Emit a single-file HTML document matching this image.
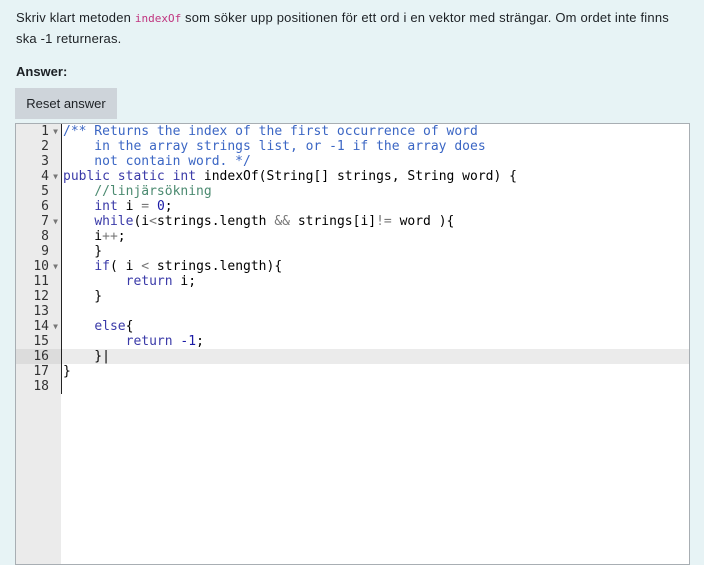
<!DOCTYPE html>
<html><head><meta charset="utf-8"><style>
html,body{margin:0;padding:0;width:704px;height:549px;overflow:hidden;background:#e7f3f5;font-family:"Liberation Sans",sans-serif;color:#1d2125}
.q{position:absolute;left:16px;top:8px;width:662px;font-size:13px;line-height:20px;letter-spacing:0.2px}
.q code{font-family:"DejaVu Sans Mono",monospace;font-size:11px;color:#c0347f;letter-spacing:0}
.ans{position:absolute;left:16px;top:64px;font-size:13px;font-weight:bold}
.btn{position:absolute;left:15px;top:88px;width:102px;height:31px;background:#ced4da;font-size:13px;line-height:31px;text-align:center;color:#1d2125}
.ed{position:absolute;left:15px;top:123px;width:673px;height:440px;border:1px solid #a8aeb3;background:#fff;overflow:hidden}
.gut{position:absolute;left:0;top:0;width:45px;height:100%;background:#ebebeb}
.ln{position:absolute;left:0;width:45px;height:15px;font-family:"DejaVu Sans Mono",monospace;font-size:13px;line-height:15px;color:#333}
.ln span{position:absolute;right:12px}
.ln i{position:absolute;right:3px;font-style:normal;font-size:8px;color:#777}
.vl{position:absolute;left:45px;top:0;width:1px;height:270px;background:#222}
.code{position:absolute;left:47px;top:0;font-family:"DejaVu Sans Mono",monospace;font-size:13px;line-height:15px;white-space:pre;color:#000}
.act{position:absolute;left:46px;top:225px;width:630px;height:15px;background:#ebebeb}
.actg{position:absolute;left:0;top:225px;width:45px;height:15px;background:#dcdcdc}
.dc{color:#3b66c4}.c{color:#4b8a70}.k{color:#3a3aa8}.o{color:#777}.n{color:#1a1aa6}
</style></head><body>
<div class="q">Skriv klart metoden <code>indexOf</code> som söker upp positionen för ett ord i en vektor med strängar. Om ordet inte finns ska -1 returneras.</div>
<div class="ans">Answer:</div>
<div class="btn">Reset answer</div>
<div class="ed">
<div class="gut"></div>
<div class="actg"></div>
<div class="act"></div>
<div class="ln" style="top:0"><span>1</span><i>▼</i></div>
<div class="ln" style="top:15px"><span>2</span></div>
<div class="ln" style="top:30px"><span>3</span></div>
<div class="ln" style="top:45px"><span>4</span><i>▼</i></div>
<div class="ln" style="top:60px"><span>5</span></div>
<div class="ln" style="top:75px"><span>6</span></div>
<div class="ln" style="top:90px"><span>7</span><i>▼</i></div>
<div class="ln" style="top:105px"><span>8</span></div>
<div class="ln" style="top:120px"><span>9</span></div>
<div class="ln" style="top:135px"><span>10</span><i>▼</i></div>
<div class="ln" style="top:150px"><span>11</span></div>
<div class="ln" style="top:165px"><span>12</span></div>
<div class="ln" style="top:180px"><span>13</span></div>
<div class="ln" style="top:195px"><span>14</span><i>▼</i></div>
<div class="ln" style="top:210px"><span>15</span></div>
<div class="ln" style="top:225px"><span>16</span></div>
<div class="ln" style="top:240px"><span>17</span></div>
<div class="ln" style="top:255px"><span>18</span></div>
<div class="vl"></div>
<div class="code"><span class="dc">/** Returns the index of the first occurrence of word
    in the array strings list, or -1 if the array does
    not contain word. */</span>
<span class="k">public static int</span> indexOf(String[] strings, String word) {
    <span class="c">//linjärsökning</span>
    <span class="k">int</span> i <span class="o">=</span> <span class="n">0</span>;
    <span class="k">while</span>(i<span class="o">&lt;</span>strings.length <span class="o">&amp;&amp;</span> strings[i]<span class="o">!=</span> word ){
    i<span class="o">++</span>;
    }
    <span class="k">if</span>( i <span class="o">&lt;</span> strings.length){
        <span class="k">return</span> i;
    }

    <span class="k">else</span>{
        <span class="k">return</span> <span class="n">-1</span>;
    }|
}
</div>
</div>
</body></html>
